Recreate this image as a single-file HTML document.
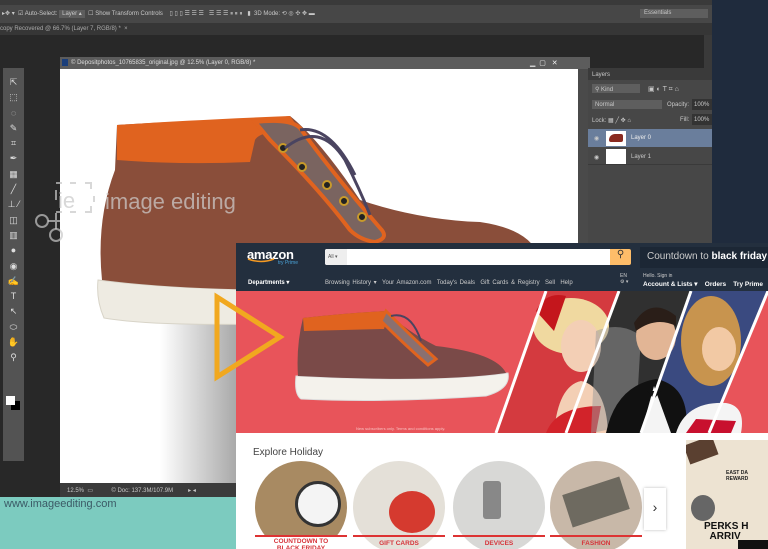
<!DOCTYPE html>
<html><head><meta charset="utf-8"><style>
*{margin:0;padding:0;box-sizing:border-box}
html,body{width:768px;height:549px;overflow:hidden}
body{background:#282828;font-family:"Liberation Sans",sans-serif;position:relative}
.a{position:absolute}
.t{color:#c8c8c8;font-size:6px;white-space:nowrap}
</style></head><body>
<div class="a" style="left:0;top:0;width:712px;height:5px;background:#3a3a3a"></div>
<div class="a" style="left:0;top:5px;width:712px;height:18px;background:#474747"></div>
<div class="a t" style="left:2px;top:10px">▸✥ ▾ &nbsp;☑ Auto-Select: <span style="background:#5d5d5d;padding:1px 3px">Layer ▴</span> &nbsp;☐ Show Transform Controls &nbsp;&nbsp; ▯ ▯ ▯ ☰ ☰ ☰ &nbsp; ☰ ☰ ☰ ⏸ ⏸ ⏸ &nbsp; ▮ &nbsp;3D Mode: ⟲ ◎ ✣ ✥ ▬</div>
<div class="a" style="left:640px;top:9px;width:68px;height:9px;background:#5e5e5e"></div>
<div class="a t" style="left:644px;top:10px">Essentials</div>
<div class="a" style="left:0;top:23px;width:712px;height:12px;background:#363636"></div>
<div class="a t" style="left:0;top:26px;color:#aaa">copy Recovered @ 66.7% (Layer 7, RGB/8) * &nbsp;×</div>
<div class="a" style="left:712px;top:0;width:56px;height:549px;background:#1f2b3d"></div>
<div class="a" style="left:704px;top:35px;width:8px;height:210px;background:#3a3a3a"></div>
<div class="a" style="left:3px;top:68px;width:21px;height:393px;background:#535353"></div>
<div class="a t" style="left:6px;top:75px;font-size:9px;line-height:15.3px;color:#ddd;text-align:center;width:15px;white-space:normal">⇱ ⬚ ◌ ✎ ⌗ ✒ ▦ ╱ ⊥ ⁄ ◫ ▥ ● ◉ ✍ T ↖ ⬭ ✋ ⚲</div>
<div class="a" style="left:11px;top:401px;width:9px;height:9px;background:#000"></div>
<div class="a" style="left:6px;top:396px;width:9px;height:9px;background:#fff"></div>
<div class="a" style="left:60px;top:57px;width:530px;height:12px;background:#5c5c5c"></div>
<div class="a" style="left:62px;top:59px;width:6px;height:7px;background:#1a3e7a"></div>
<div class="a t" style="left:71px;top:60px;color:#ddd">© Depositphotos_10765835_original.jpg @ 12.5% (Layer 0, RGB/8) *</div>
<div class="a t" style="left:530px;top:59px;color:#eee;font-size:7px">▁ &nbsp;▢ &nbsp;&nbsp;✕</div>
<div class="a" style="left:60px;top:69px;width:518px;height:415px;background:#fff"></div>
<div class="a" style="left:160px;top:300px;width:76px;height:183px;background:linear-gradient(90deg,rgba(255,255,255,0),#a9a9a9)"></div>
<div class="a" style="left:578px;top:69px;width:10px;height:415px;background:#4a4a4a"></div>
<div class="a" style="left:60px;top:483px;width:176px;height:14px;background:#3b3b3b"></div>
<div class="a t" style="left:67px;top:487px">12.5% &nbsp;▭ &nbsp;&nbsp;&nbsp;&nbsp;&nbsp;&nbsp;&nbsp;&nbsp;&nbsp;&nbsp;© Doc: 137.3M/107.9M &nbsp;&nbsp;&nbsp;&nbsp;&nbsp;&nbsp;&nbsp;&nbsp;▸ ◂</div>
<div class="a" style="left:588px;top:68px;width:124px;height:432px;background:#474747"></div>
<div class="a" style="left:588px;top:68px;width:124px;height:12px;background:#3a3a3a"></div>
<div class="a t" style="left:592px;top:72px">Layers</div>
<div class="a" style="left:592px;top:84px;width:48px;height:9px;background:#5e5e5e"></div>
<div class="a t" style="left:595px;top:86px">⚲ Kind</div>
<div class="a t" style="left:648px;top:85px;font-size:7px">▣ ◐ T ⌗ ⌂</div>
<div class="a" style="left:592px;top:100px;width:70px;height:9px;background:#5e5e5e"></div>
<div class="a t" style="left:595px;top:102px">Normal</div>
<div class="a t" style="left:667px;top:102px">Opacity:</div>
<div class="a" style="left:692px;top:99px;width:20px;height:11px;background:#333"></div>
<div class="a t" style="left:694px;top:102px">100%</div>
<div class="a t" style="left:592px;top:117px">Lock: ▦ ╱ ✥ ⌂</div>
<div class="a t" style="left:680px;top:117px">Fill:</div>
<div class="a" style="left:692px;top:114px;width:20px;height:11px;background:#333"></div>
<div class="a t" style="left:694px;top:117px">100%</div>
<div class="a" style="left:588px;top:129px;width:124px;height:18px;background:#6a7e9c"></div>
<div class="a" style="left:606px;top:131px;width:20px;height:15px;background:#fff"></div>
<div class="a" style="left:609px;top:134px;width:14px;height:8px;background:#8a2a20;border-radius:6px 2px 2px 2px"></div>
<div class="a t" style="left:594px;top:135px">◉</div><div class="a t" style="left:631px;top:135px;color:#eee">Layer 0</div>
<div class="a" style="left:588px;top:147px;width:124px;height:18px;border-bottom:1px solid #3a3a3a"></div>
<div class="a" style="left:606px;top:149px;width:20px;height:15px;background:#fff"></div>
<div class="a t" style="left:594px;top:154px">◉</div><div class="a t" style="left:631px;top:154px">Layer 1</div>
<div class="a" style="left:0;top:497px;width:236px;height:52px;background:#7ccbbf"></div>
<div class="a" style="left:4px;top:498px;font-size:11px;color:#3b5a66">www.imageediting.com</div>
<svg class="a" style="left:0;top:0" width="768" height="549">
<path d="M98 280 Q96 300 104 318 Q150 326 260 324 L420 318 Q520 306 540 275 Q500 280 300 290 Q180 290 98 280Z" fill="#eeebe2" stroke="#d8d4c8"/>
<path d="M102 280 Q96 220 115 170 L117 125 Q190 120 255 120 L290 116 Q320 140 360 200 Q420 220 480 222 Q535 230 540 262 Q540 280 500 284 Q420 290 300 290 Q180 290 102 280Z" fill="#8a4e3a"/>
<path d="M117 125 Q190 120 290 116 L300 130 Q260 130 255 140 L250 162 Q180 165 117 160Z" fill="#e0631f"/>
<path d="M255 122 Q290 118 300 128 Q330 170 380 228 Q390 238 375 242 Q360 240 350 230 Q320 190 270 140Z" fill="#7a6460" stroke="#e0631f" stroke-width="4"/>
<g fill="#222" stroke="#c89a2a" stroke-width="2"><circle cx="283" cy="148" r="4"/><circle cx="302" cy="167" r="4"/><circle cx="327" cy="185" r="4"/><circle cx="344" cy="201" r="4"/><circle cx="362" cy="217" r="4"/></g>
<path d="M285 148 Q320 120 345 160 Q360 190 370 215 M300 130 Q330 125 355 175" stroke="#4a4460" stroke-width="3" fill="none"/>
<text x="58" y="208" font-family="Liberation Sans" font-size="22" fill="#c8c8c8" fill-opacity="0.7">ie</text>
<text x="105" y="209" font-family="Liberation Sans" font-size="22" fill="#d0d0d0" fill-opacity="0.7">image editing</text>
<g stroke="#c8c8c8" stroke-opacity="0.7" stroke-width="2" fill="none"><path d="M56 183h6M70 183h6M85 183h6v6M56 190v10M94 196v6M56 212h6M70 212h6M85 212h6v-6"/><circle cx="42" cy="221" r="6"/><circle cx="56" cy="235" r="6"/><path d="M48 221h12M56 213v16"/></g>
</svg>
<div class="a" style="left:236px;top:243px;width:532px;height:48px;background:#232f3e"></div>
<div class="a" style="left:247px;top:247px;color:#fff;font-size:13px;font-weight:bold;letter-spacing:-0.3px">amazon</div>
<div class="a" style="left:278px;top:260px;color:#4aa3d8;font-size:5px">try Prime</div>
<svg class="a" style="left:247px;top:258px" width="30" height="6"><path d="M1 1 Q14 6 27 1" stroke="#f59a23" stroke-width="1.5" fill="none"/></svg>
<div class="a" style="left:325px;top:249px;width:287px;height:16px;background:#fff;border-radius:2px"></div>
<div class="a" style="left:325px;top:249px;width:22px;height:16px;background:#eee;border-radius:2px 0 0 2px;font-size:5px;color:#555;padding:5px 3px">All ▾</div>
<div class="a" style="left:610px;top:249px;width:21px;height:16px;background:#febd69;border-radius:0 2px 2px 0;font-size:10px;text-align:center;color:#333">⚲</div>
<div class="a" style="left:640px;top:247px;width:128px;height:21px;background:#1c2735"></div>
<div class="a" style="left:647px;top:251px;color:#ccc;font-size:10px;white-space:nowrap">Countdown to <b style="color:#fff">black friday</b></div>
<div class="a" style="left:248px;top:279px;color:#fff;font-size:6px;font-weight:bold">Departments ▾</div>
<div class="a" style="left:325px;top:279px;color:#ccc;font-size:6px;white-space:nowrap;word-spacing:1px">Browsing History ▾ &nbsp;Your Amazon.com &nbsp;Today's Deals &nbsp;Gift Cards &amp; Registry &nbsp;Sell &nbsp;Help</div>
<div class="a" style="left:620px;top:273px;color:#ccc;font-size:5px">EN<br>⚙ ▾</div>
<div class="a" style="left:643px;top:273px;color:#ccc;font-size:5px">Hello. Sign in</div>
<div class="a" style="left:643px;top:280px;color:#fff;font-size:6.5px;font-weight:bold;white-space:nowrap">Account &amp; Lists ▾ &nbsp;&nbsp; Orders &nbsp;&nbsp; Try Prime</div>
<div class="a" style="left:236px;top:291px;width:532px;height:142px;background:#e8545a;overflow:hidden">
<svg width="532" height="142">
<polygon points="260,142 310,0 383,0 330,142" fill="#d43a3f"/>
<polygon points="330,142 383,0 455,0 405,142" fill="#303030"/>
<polygon points="405,142 455,0 532,0 473,142" fill="#3a4a80"/>
<polygon points="473,142 532,0 532,142" fill="#e8545a"/>
<ellipse cx="335" cy="35" rx="38" ry="28" fill="#f0d9a0"/>
<path d="M300 20 Q310 0 330 5 L318 40Z" fill="#c4161c"/>
<ellipse cx="345" cy="55" rx="20" ry="26" fill="#f3cfb5"/>
<path d="M318 142 Q322 95 345 90 Q370 95 372 142Z" fill="#f3cfb5"/>
<path d="M310 142 Q320 115 365 115 L360 142Z" fill="#d2232a"/>
<path d="M360 40 Q385 30 405 45 L400 130 Q370 140 355 142Z" fill="#9a9a9a" fill-opacity="0.5"/>
<ellipse cx="420" cy="45" rx="20" ry="24" fill="#e2b595"/><path d="M398 32 Q415 5 440 25 L440 35 Q420 25 400 40Z" fill="#2a1e18"/>
<path d="M370 142 Q380 95 420 88 Q455 95 450 142Z" fill="#111"/><path d="M405 142 L418 95 L435 142Z" fill="#f4f4f4"/><path d="M411 100 L425 100 L418 108Z" fill="#111"/>
<ellipse cx="475" cy="50" rx="30" ry="45" fill="#c8944e"/><ellipse cx="483" cy="58" rx="17" ry="22" fill="#f2c9a4"/>
<path d="M440 142 Q450 110 490 112 Q510 115 505 142Z" fill="#f4f4f4"/><path d="M450 142 L460 128 L500 130 L495 142Z" fill="#c8102e"/>
<path d="M260 142 L310 0 M330 142 L383 0 M405 142 L455 0 M473 142 L532 0" stroke="#fff" stroke-width="3"/>
<path d="M60 85 Q58 103 65 108 Q150 112 250 105 Q275 98 272 82 Q200 92 60 85Z" fill="#f4f2ec" stroke="#ddd"/>
<path d="M62 85 Q60 55 67 27 Q110 22 150 20 Q170 40 200 55 Q260 62 270 82 Q200 92 62 85Z" fill="#7a4a48"/>
<path d="M67 27 Q110 22 150 20 L155 27 Q150 30 148 38 L68 40Z" fill="#e0631f"/>
<path d="M150 20 Q175 45 200 68 L192 74 Q170 55 145 30Z" fill="#8a7070" stroke="#e0631f" stroke-width="3"/>
<path d="M155 25 Q175 20 185 50" stroke="#4a4460" stroke-width="2" fill="none"/>
<text x="120" y="139" font-size="4" fill="#f8c0c0" font-family="Liberation Sans">New subscribers only. Terms and conditions apply.</text>
</svg></div>
<svg class="a" style="left:205px;top:285px" width="90" height="100"><path d="M12 12 L75 52 L12 92Z" fill="none" stroke="#f1a81f" stroke-width="5"/></svg>
<div class="a" style="left:236px;top:433px;width:532px;height:116px;background:#fff;overflow:hidden"></div>
<div class="a" style="left:253px;top:447px;font-size:10px;color:#444">Explore Holiday</div>
<div class="a" style="left:255px;top:461px;width:92px;height:92px;border-radius:50%;background:#a88a62;overflow:hidden"><div style="margin:20px 0 0 40px;width:46px;height:46px;border-radius:50%;background:#f4f4f4;border:3px solid #333"></div></div>
<div class="a" style="left:353px;top:461px;width:92px;height:92px;border-radius:50%;background:#e4e0d8;overflow:hidden"><div style="margin:30px 0 0 36px;width:46px;height:42px;border-radius:50%;background:#d53a2f"></div></div>
<div class="a" style="left:453px;top:461px;width:92px;height:92px;border-radius:50%;background:#d8d8d6"><div style="margin:20px 0 0 30px;width:18px;height:38px;border-radius:3px;background:#888"></div></div>
<div class="a" style="left:550px;top:461px;width:92px;height:92px;border-radius:50%;background:#c8b8a8"><div style="margin:24px 0 0 16px;width:60px;height:34px;background:#6e6a60;transform:rotate(-18deg)"></div></div>
<div class="a" style="left:255px;top:535px;width:92px;height:3px;background:#fff"></div>
<div class="a" style="left:255px;top:535px;width:92px;height:2px;background:#d33"></div>
<div class="a" style="left:353px;top:535px;width:92px;height:2px;background:#d33"></div>
<div class="a" style="left:453px;top:535px;width:92px;height:2px;background:#d33"></div>
<div class="a" style="left:550px;top:535px;width:92px;height:2px;background:#d33"></div>
<div class="a" style="left:255px;top:538px;width:92px;height:11px;background:#fff;overflow:hidden;text-align:center;font-size:6.5px;font-weight:bold;color:#d6343a;line-height:7px">COUNTDOWN TO<br>BLACK FRIDAY</div>
<div class="a" style="left:353px;top:540px;width:92px;text-align:center;font-size:6.5px;font-weight:bold;color:#d6343a">GIFT CARDS</div>
<div class="a" style="left:453px;top:540px;width:92px;text-align:center;font-size:6.5px;font-weight:bold;color:#d6343a">DEVICES</div>
<div class="a" style="left:550px;top:540px;width:92px;text-align:center;font-size:6.5px;font-weight:bold;color:#d6343a">FASHION</div>
<div class="a" style="left:644px;top:488px;width:22px;height:42px;background:#fff;box-shadow:0 0 3px #bbb;font-size:14px;color:#333;text-align:center;padding-top:11px">›</div>
<div class="a" style="left:686px;top:440px;width:82px;height:109px;background:#ede3d2;overflow:hidden">
<div class="a" style="left:5px;top:55px;width:24px;height:26px;border-radius:50%;background:#666"></div>
<div class="a" style="left:0;top:0;width:30px;height:20px;background:#5a4030;transform:rotate(-20deg)"></div>
<div class="a" style="left:40px;top:30px;font-size:5px;font-weight:bold;color:#222">EAST DA<br>REWARD</div>
<div class="a" style="left:18px;top:82px;font-size:10px;font-weight:bold;color:#111;line-height:10px">PERKS H<br>&nbsp;&nbsp;ARRIV</div>
<div class="a" style="left:52px;top:100px;width:30px;height:9px;background:#111"></div>
</div>
</body></html>
